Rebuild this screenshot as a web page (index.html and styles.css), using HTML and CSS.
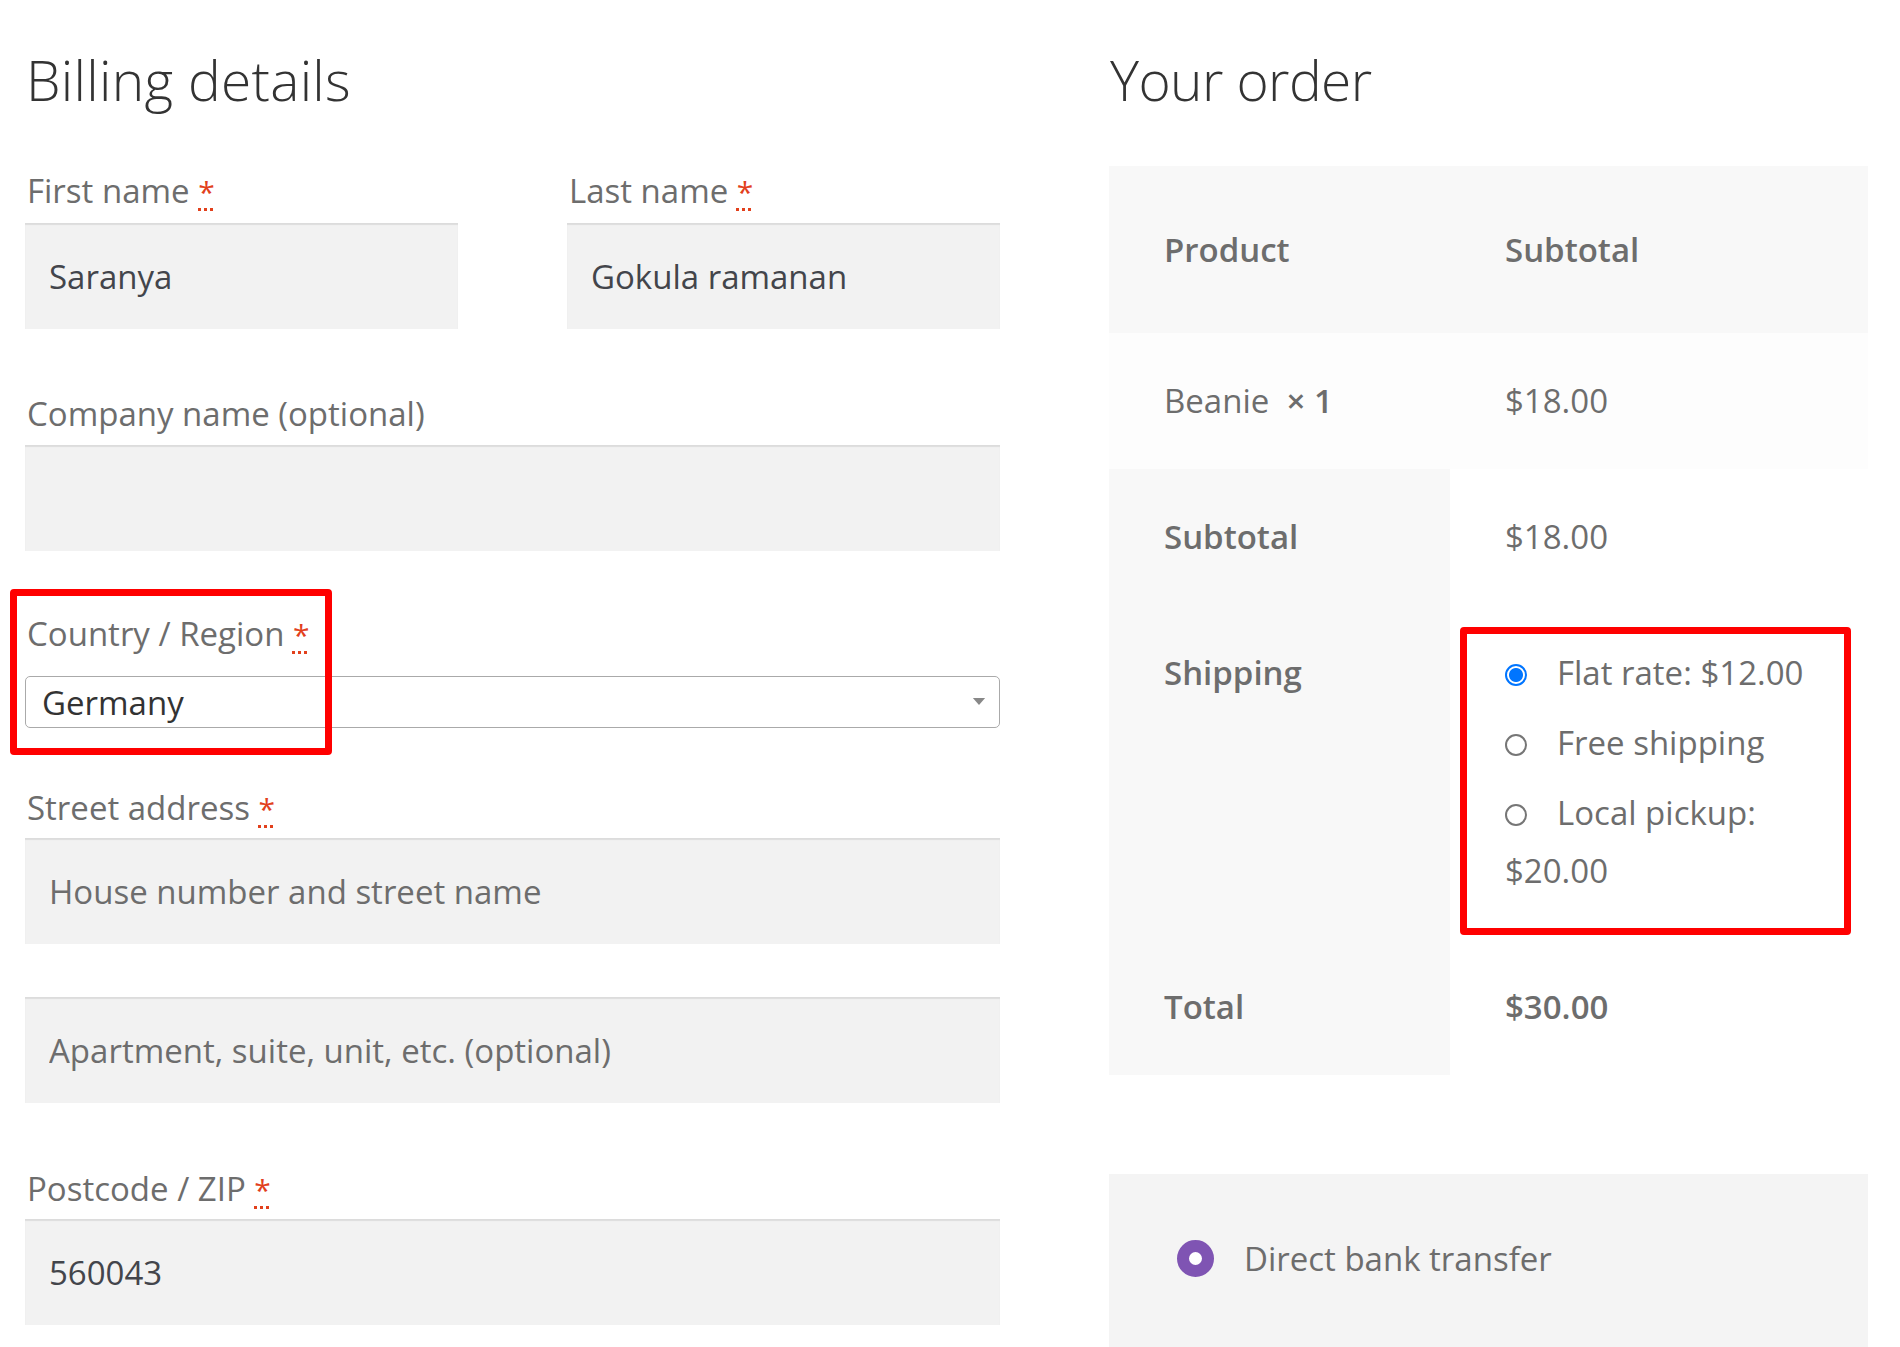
FILE: index.html
```html
<!DOCTYPE html>
<html lang="en">
<head>
<meta charset="utf-8">
<title>Checkout</title>
<link rel="stylesheet" href="styles.css">
</head>
<body>
<div class="page">
  <section class="billing">
    <h3 class="heading">Billing details</h3>

    <div class="row row-names">
      <div class="field">
        <label class="label">First name <abbr class="required" title="required">*</abbr></label>
        <input class="input" type="text" value="Saranya">
      </div>
      <div class="field">
        <label class="label">Last name <abbr class="required" title="required">*</abbr></label>
        <input class="input" type="text" value="Gokula ramanan">
      </div>
    </div>

    <div class="row row-company">
      <label class="label">Company name (optional)</label>
      <input class="input" type="text" value="">
    </div>

    <div class="row row-country">
      <label class="label label-country">Country / Region <abbr class="required" title="required">*</abbr></label>
      <div class="select-wrap">
        <select class="select"><option>Germany</option></select>
        <svg class="select-arrow" width="16" height="10" viewBox="0 0 16 10"><path d="M1 1 L15 1 L8 9 Z" fill="#888"/></svg>
      </div>
    </div>

    <div class="row row-street">
      <label class="label">Street address <abbr class="required" title="required">*</abbr></label>
      <input class="input" type="text" placeholder="House number and street name">
      <input class="input input-apt" type="text" placeholder="Apartment, suite, unit, etc. (optional)">
    </div>

    <div class="row row-postcode">
      <label class="label">Postcode / ZIP <abbr class="required" title="required">*</abbr></label>
      <input class="input" type="text" value="560043">
    </div>
  </section>

  <section class="order">
    <h3 class="heading heading-order">Your order</h3>
    <table class="order-table">
      <thead>
        <tr>
          <th class="col-name">Product</th>
          <th class="col-total">Subtotal</th>
        </tr>
      </thead>
      <tbody>
        <tr class="cart-item">
          <td class="col-name">Beanie&nbsp; <strong class="qty">×&nbsp;1</strong></td>
          <td class="col-total">$18.00</td>
        </tr>
      </tbody>
      <tfoot>
        <tr>
          <th>Subtotal</th>
          <td>$18.00</td>
        </tr>
        <tr class="shipping">
          <th>Shipping</th>
          <td>
            <ul class="methods">
              <li><span class="radio radio-on"></span>Flat rate: $12.00</li>
              <li><span class="radio"></span>Free shipping</li>
              <li><span class="radio"></span>Local pickup:<br>$20.00</li>
            </ul>
          </td>
        </tr>
        <tr class="total">
          <th>Total</th>
          <td><strong>$30.00</strong></td>
        </tr>
      </tfoot>
    </table>

    <div class="payment">
      <span class="pay-radio"></span>
      <span class="pay-label">Direct bank transfer</span>
    </div>
  </section>

  <div class="highlight highlight-country"></div>
  <div class="highlight highlight-shipping"></div>
</div>
</body>
</html>
```

FILE: styles.css
```css
* { box-sizing: border-box; }

html, body {
  margin: 0;
  padding: 0;
  background: #ffffff;
}

body {
  font-family: "Open Sans", "Noto Sans", "Liberation Sans", sans-serif;
  color: #6d6d6d;
  overflow: hidden;
  height: 1347px;
}

.page {
  position: relative;
  display: grid;
  grid-template-columns: 975px 759px;
  column-gap: 109px;
  padding: 47px 0 0 25px;
}

.heading {
  margin: 0;
  font-size: 55px;
  line-height: 66px;
  font-weight: 300;
  color: #333333;
  padding-left: 1px;
  letter-spacing: 0.3px;
}

.heading-order { letter-spacing: -0.6px; }

/* ---------- billing form ---------- */
.row { display: block; }

.row-names {
  margin-top: 58px;
  display: grid;
  grid-template-columns: 433px 433px;
  column-gap: 109px;
}

.row-company { margin-top: 65px; }
.row-country { margin-top: 63px; }
.row-street { margin-top: 60px; }
.row-postcode { margin-top: 66px; }

.label {
  display: block;
  font-size: 33px;
  line-height: 40px;
  color: #6d6d6d;
  margin-bottom: 11px;
  padding-left: 2px;
}

.label-country { margin-bottom: 21px; }
.row-street .label { margin-bottom: 9px; }
.row-postcode .label { margin-bottom: 9px; }

.required {
  color: #e2401c;
  text-decoration: underline dotted;
  text-decoration-thickness: 3px;
  text-underline-offset: 5px;
  font-size: 30px;
}

.input {
  display: block;
  width: 100%;
  height: 106px;
  border: none;
  margin: 0;
  padding: 0 24px;
  background: #f2f2f2;
  box-shadow: inset 0 2px 1px rgba(0, 0, 0, 0.09);
  font-family: inherit;
  font-size: 33px;
  color: #43454b;
  outline: none;
}

.input::placeholder { color: #6d6d6d; opacity: 1; }

.input-apt { margin-top: 53px; }

.select-wrap { position: relative; }

.select {
  display: block;
  width: 100%;
  height: 52px;
  margin: 0;
  padding: 0 16px;
  border: 1px solid #aaaaaa;
  border-radius: 5px;
  background: #ffffff;
  font-family: inherit;
  font-size: 33px;
  color: #333333;
  -webkit-appearance: none;
  appearance: none;
}

.select-arrow {
  position: absolute;
  right: 14px;
  top: 21px;
  width: 14px;
  height: 9px;
}

/* ---------- order review ---------- */
.order-table {
  margin-top: 53px;
  width: 759px;
  border-collapse: collapse;
  border-spacing: 0;
  table-layout: fixed;
  font-size: 33px;
  line-height: 58px;
  color: #6d6d6d;
}

.order-table th,
.order-table td {
  padding: 39px 0 39px 55px;
  text-align: left;
  vertical-align: top;
}

.order-table th { font-weight: 600; }

.order-table .col-name { width: 341px; }

.order-table thead th {
  background: #f8f8f8;
  height: 167px;
  padding-top: 0;
  padding-bottom: 0;
  vertical-align: middle;
}

.cart-item td { background: #fdfdfd; height: 136px; }

.qty { font-weight: 600; }

.order-table tfoot th { background: #f8f8f8; }
.order-table tfoot td { background: #ffffff; }
.order-table tfoot strong { font-weight: 600; }

.methods {
  list-style: none;
  margin: 0;
  padding: 0;
}

.methods li { margin: 0 0 12px 0; }
.methods li:last-child { margin-bottom: 0; }

.radio {
  display: inline-block;
  width: 22px;
  height: 22px;
  border: 2px solid #767676;
  border-radius: 50%;
  margin: 0 30px 0 0;
  vertical-align: -1px;
  background: #ffffff;
}

.radio-on {
  border: 2px solid #0075ff;
  background: radial-gradient(circle, #0075ff 0, #0075ff 6.5px, #ffffff 7.5px);
}

.payment {
  margin-top: 99px;
  height: 174px;
  background: #f4f4f4;
  display: flex;
  align-items: center;
  padding-left: 68px;
  padding-bottom: 6px;
  gap: 30px;
}

.pay-radio {
  width: 37px;
  height: 37px;
  border-radius: 50%;
  border: 12px solid #7f54b3;
  background: #ffffff;
  flex: none;
}

.pay-label {
  font-size: 33px;
  line-height: 40px;
  color: #6d6d6d;
  padding-top: 2px;
}

/* ---------- annotation boxes ---------- */
.highlight {
  position: absolute;
  border: 7px solid #ff0000;
  border-radius: 4px;
  pointer-events: none;
}

.highlight-country {
  left: 10px;
  top: 589px;
  width: 322px;
  height: 166px;
}

.highlight-shipping {
  left: 1460px;
  top: 627px;
  width: 391px;
  height: 308px;
}
```
